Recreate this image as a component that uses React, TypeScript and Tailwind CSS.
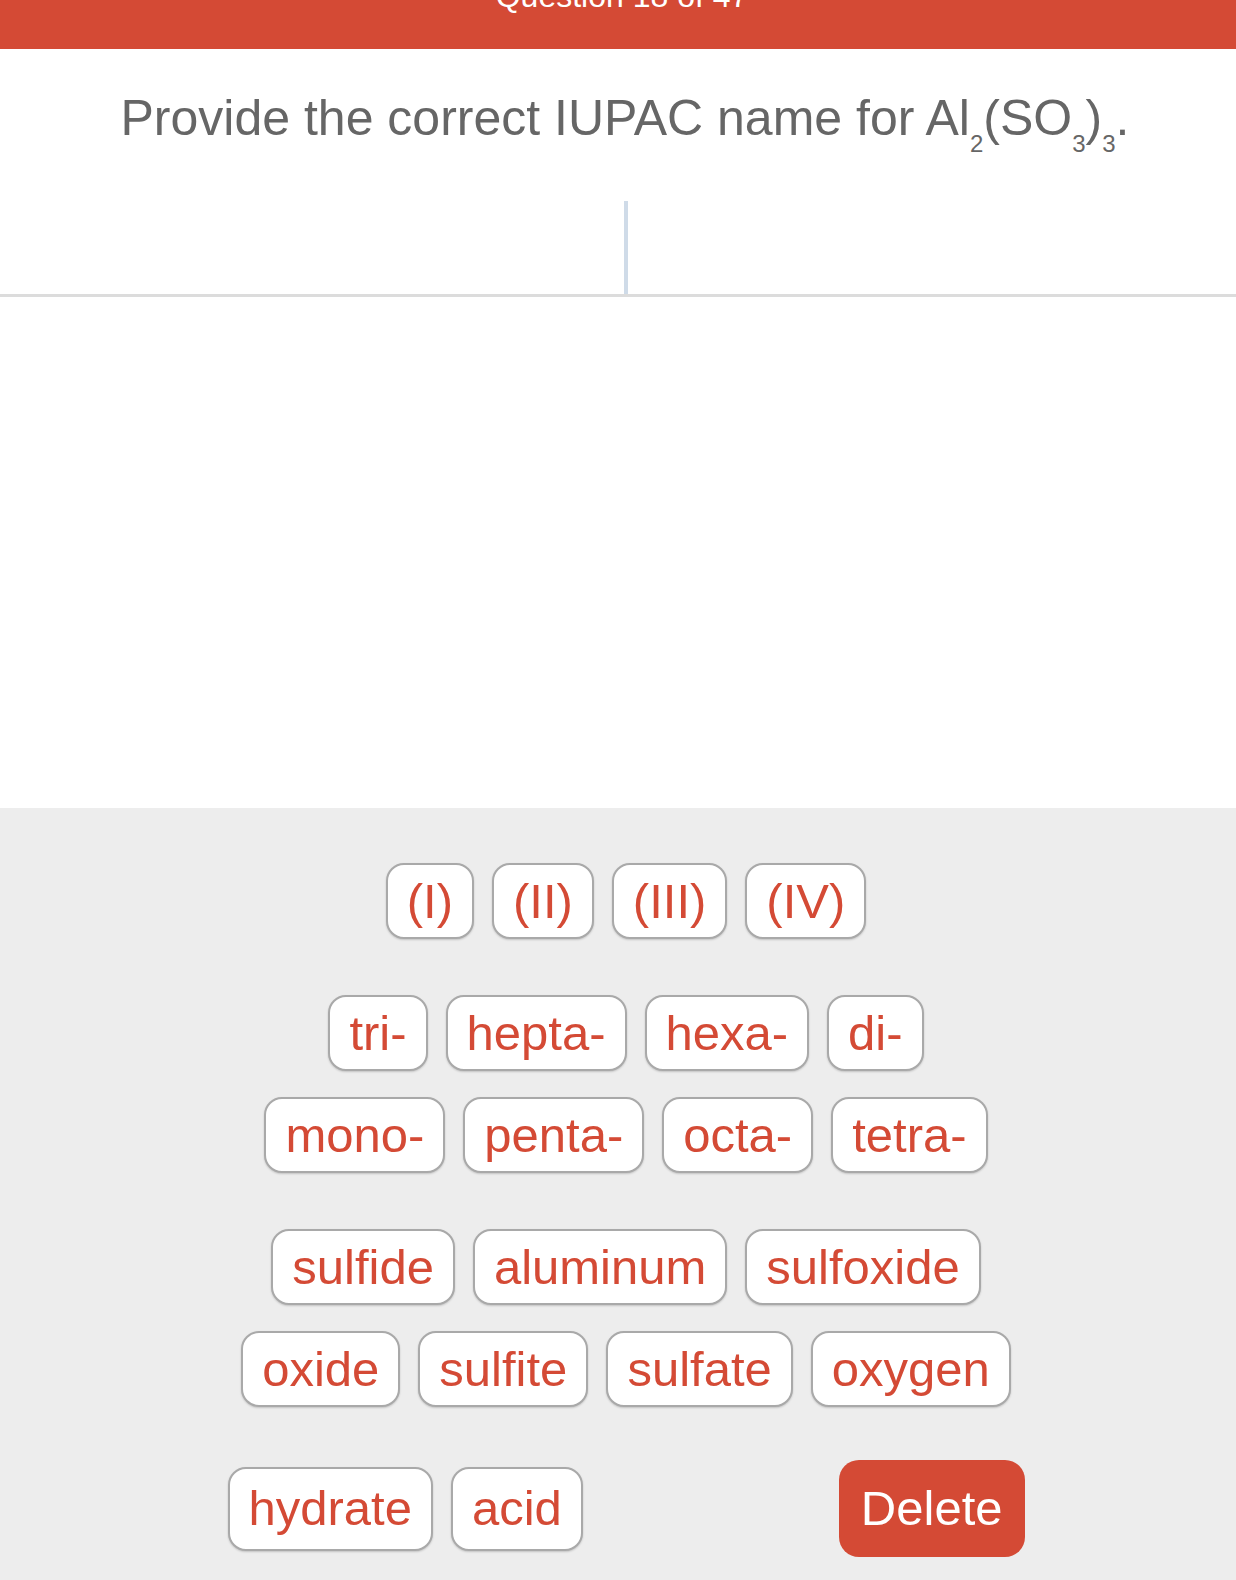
import React from 'react'

const RED = 'text-[#d44a35]'

const numerals = ['(I)', '(II)', '(III)', '(IV)']
const prefixesA = ['tri-', 'hepta-', 'hexa-', 'di-']
const prefixesB = ['mono-', 'penta-', 'octa-', 'tetra-']
const wordsA = ['sulfide', 'aluminum', 'sulfoxide']
const wordsB = ['oxide', 'sulfite', 'sulfate', 'oxygen']

function Tile({ label, tall }: { label: string; tall?: boolean }) {
  return (
    <button
      className={`flex items-center justify-center ${tall ? 'h-[84px]' : 'h-[76px]'} px-[19px] rounded-[18px] bg-white border-2 border-[#a9a9a9] shadow-[0_1px_2px_rgba(0,0,0,0.18)] text-[49px] leading-none ${RED}`}
    >
      {label}
    </button>
  )
}

function Row({ items }: { items: string[] }) {
  return (
    <div className="flex justify-center gap-[18px]">
      {items.map(i => (
        <Tile key={i} label={i} />
      ))}
    </div>
  )
}

export default function App() {
  return (
    <div className="w-[1236px] min-h-[1580px] bg-white flex flex-col" style={{ fontFamily: '"Liberation Sans", Arial, Helvetica, sans-serif' }}>
      {/* header, scrolled so only the bottom of the title shows */}
      <div className="h-[49px] bg-[#d44a35] overflow-hidden flex justify-center">
        <p className="text-white text-[32px] leading-[32px] -mt-[20px] pl-[8px]">Question 18 of 47</p>
      </div>

      <p className="pt-[39px] pl-[14px] text-center text-[50px] leading-[60px] text-[#666666]">
        Provide the correct IUPAC name for Al
        <sub className="text-[24px] -bottom-[17px]">2</sub>
        (SO
        <sub className="text-[24px] -bottom-[17px]">3</sub>)
        <sub className="text-[24px] -bottom-[17px]">3</sub>.
      </p>

      {/* answer field */}
      <div className="mt-[53px] h-[96px] border-b-[3px] border-[#dcdcdc] flex justify-center pl-[16px]">
        <div className="w-[4px] h-full bg-[#cfdbe8]" />
      </div>

      <div className="h-[511px]" />

      {/* tile tray */}
      <div className="flex-1 bg-[#ededed] pt-[55px] pb-[23px] pl-[16px] flex flex-col">
        <Row items={numerals} />

        <div className="mt-[56px] flex flex-col gap-[26px]">
          <Row items={prefixesA} />
          <Row items={prefixesB} />
        </div>

        <div className="mt-[56px] flex flex-col gap-[26px]">
          <Row items={wordsA} />
          <Row items={wordsB} />
        </div>

        <div className="mt-[53px] w-[797px] mx-auto flex items-center justify-between">
          <div className="flex gap-[18px]">
            <Tile label="hydrate" tall />
            <Tile label="acid" tall />
          </div>
          <button className="h-[97px] px-[22px] rounded-[20px] bg-[#d44a35] text-white text-[49px] leading-none">
            Delete
          </button>
        </div>
      </div>
    </div>
  )
}
